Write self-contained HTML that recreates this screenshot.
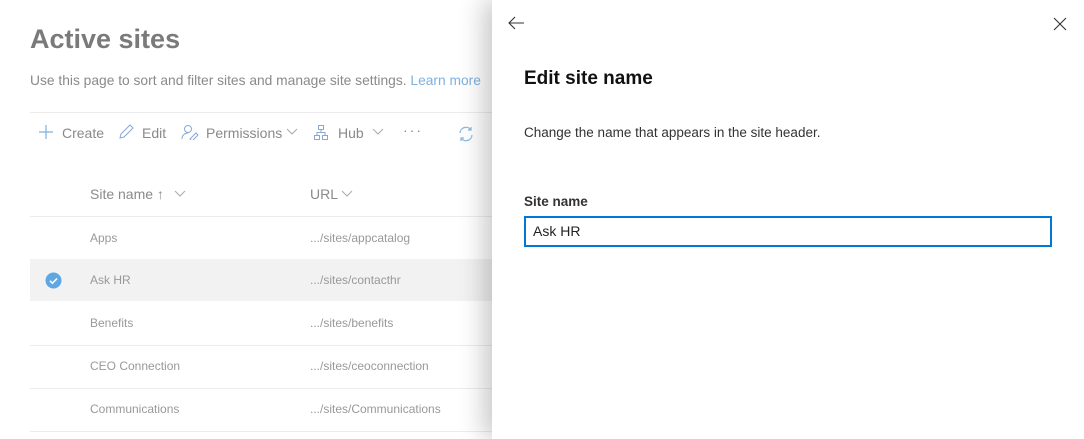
<!DOCTYPE html>
<html><head><style>
body{margin:0;width:1084px;height:439px;overflow:hidden;background:#fff;font-family:"Liberation Sans",sans-serif;position:relative}
.l{position:absolute;left:0;top:0;width:492px;height:439px}
.t{position:absolute;white-space:nowrap}
.h1{left:30px;top:24px;font-size:27px;font-weight:bold;color:#7a7a7a}
.sub{left:30px;top:73px;font-size:13.8px;color:#8a8a8a}
.line{position:absolute;left:30px;width:462px;height:1px;background:#ececec}
.cmd{top:125px;font-size:14px;color:#8a8a8a}
.row{position:absolute;left:30px;width:462px;height:42px;font-size:12px;color:#999}
.row span{position:absolute;top:14px}
.p{position:absolute;left:492px;top:0;width:592px;height:439px;background:#fff;box-shadow:-8px 0 24px rgba(0,0,0,.22)}
</style></head><body>
<div class="l">
<div class="t h1">Active sites</div>
<div class="t sub">Use this page to sort and filter sites and manage site settings. <span style="color:#7fb0e0">Learn more</span></div>
<div class="line" style="top:112px"></div>
<svg style="position:absolute;left:38px;top:124px" width="16" height="16"><path d="M8 1v14M1 8h14" stroke="#7fb0e0" stroke-width="1.2" fill="none"/></svg>
<div class="t cmd" style="left:62px">Create</div>
<svg style="position:absolute;left:118px;top:124px" width="16" height="16"><path d="M2 14l1-4 9-9 3 3-9 9z" stroke="#8aa6d6" fill="none"/></svg>
<div class="t cmd" style="left:142px">Edit</div>
<svg style="position:absolute;left:181px;top:124px" width="18" height="16"><circle cx="7" cy="5" r="3.5" stroke="#8aa6d6" fill="none"/><path d="M1 15c0-4 3-6 6-6M9 15l6-6 2 2-6 6z" stroke="#8aa6d6" fill="none"/></svg>
<div class="t cmd" style="left:206px">Permissions</div>
<svg style="position:absolute;left:286px;top:128px" width="12" height="8"><path d="M1 1l5 5 5-5" stroke="#aaa" fill="none"/></svg>
<svg style="position:absolute;left:313px;top:124px" width="16" height="16"><rect x="5.5" y="1.5" width="5" height="4" stroke="#8aa6d6" fill="none"/><rect x="1.5" y="11.5" width="5" height="4" stroke="#8aa6d6" fill="none"/><rect x="9.5" y="11.5" width="5" height="4" stroke="#8aa6d6" fill="none"/><path d="M8 5.5v3M4 11.5v-3h8v3" stroke="#8aa6d6" fill="none"/></svg>
<div class="t cmd" style="left:338px">Hub</div>
<svg style="position:absolute;left:372px;top:128px" width="12" height="8"><path d="M1 1l5 5 5-5" stroke="#aaa" fill="none"/></svg>
<div class="t cmd" style="left:403px;top:122px;letter-spacing:2px">···</div>
<svg style="position:absolute;left:457px;top:125px" width="18" height="18"><path d="M3 8a6 6 0 0 1 11-3M15 10a6 6 0 0 1-11 3M14 2v3h-3M4 16v-3h3" stroke="#8ab8e0" stroke-width="1.2" fill="none"/></svg>
<div class="t" style="left:90px;top:186px;font-size:14px;color:#8a8a8a">Site name ↑</div>
<svg style="position:absolute;left:174px;top:190px" width="12" height="8"><path d="M1 1l5 5 5-5" stroke="#aaa" fill="none"/></svg>
<div class="t" style="left:310px;top:186px;font-size:14px;color:#8a8a8a">URL</div>
<svg style="position:absolute;left:341px;top:190px" width="12" height="8"><path d="M1 1l5 5 5-5" stroke="#aaa" fill="none"/></svg>
<div class="line" style="top:216px"></div>
<div class="row" style="top:217px"><span style="left:60px">Apps</span><span style="left:280px">.../sites/appcatalog</span></div>
<div class="row" style="top:259px;background:#f2f2f2"><span style="left:60px">Ask HR</span><span style="left:280px">.../sites/contacthr</span>
<svg style="position:absolute;left:15px;top:13px" width="17" height="17"><circle cx="8.5" cy="8.5" r="8" fill="#5da7e4"/><path d="M5 8.8l2.4 2.4 4.6-4.6" stroke="#fff" stroke-width="1.6" fill="none"/></svg></div>
<div class="row" style="top:302px"><span style="left:60px">Benefits</span><span style="left:280px">.../sites/benefits</span></div>
<div class="line" style="top:345px"></div>
<div class="row" style="top:345px"><span style="left:60px">CEO Connection</span><span style="left:280px">.../sites/ceoconnection</span></div>
<div class="line" style="top:388px"></div>
<div class="row" style="top:388px"><span style="left:60px">Communications</span><span style="left:280px">.../sites/Communications</span></div>
<div class="line" style="top:431px"></div>
</div>
<div class="p">
<svg style="position:absolute;left:15px;top:16px" width="18" height="14"><path d="M17 7H2M8 1L2 7l6 6" stroke="#333" stroke-width="1.1" fill="none"/></svg>
<svg style="position:absolute;left:561px;top:17px" width="14" height="14"><path d="M1 1l12 12M13 1L1 13" stroke="#333" stroke-width="1.1" fill="none"/></svg>
<div class="t" style="left:32px;top:68px;font-size:19px;font-weight:bold;color:#111">Edit site name</div>
<div class="t" style="left:32px;top:125px;font-size:13.5px;color:#333">Change the name that appears in the site header.</div>
<div class="t" style="left:32px;top:194px;font-size:13.5px;font-weight:bold;color:#333">Site name</div>
<div style="position:absolute;left:32px;top:216px;width:528px;height:31px;box-sizing:border-box;border:2px solid #0078d4;font-size:14px;color:#222;line-height:27px;padding-left:7px">Ask HR</div>
</div>
</body></html>
